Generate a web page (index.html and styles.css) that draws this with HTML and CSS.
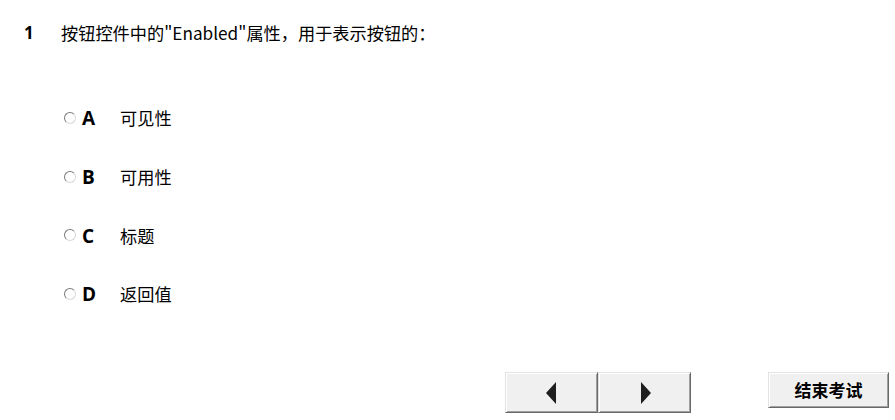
FILE: index.html
```html
<!DOCTYPE html>
<html lang="zh-CN">
<head>
<meta charset="utf-8">
<title>考试</title>
<link rel="stylesheet" href="styles.css">
</head>
<body>
<div class="page">
  <div class="question">
    <span class="qnum">1</span>
    <span class="qtext">按钮控件中的"Enabled"属性，用于表示按钮的：</span>
  </div>
  <ul class="options">
    <li class="option"><span class="radio"></span><span class="letter">A</span><span class="otext">可见性</span></li>
    <li class="option"><span class="radio"></span><span class="letter">B</span><span class="otext">可用性</span></li>
    <li class="option"><span class="radio"></span><span class="letter">C</span><span class="otext">标题</span></li>
    <li class="option"><span class="radio"></span><span class="letter">D</span><span class="otext">返回值</span></li>
  </ul>
  <div class="footer">
    <div class="nav">
      <button class="btn navbtn" type="button" aria-label="上一题"><span class="tri tri-left"></span></button>
      <button class="btn navbtn" type="button" aria-label="下一题"><span class="tri tri-right"></span></button>
    </div>
    <button class="btn endbtn" type="button">结束考试</button>
  </div>
</div>
</body>
</html>
```

FILE: styles.css
```css
html, body {
  margin: 0;
  padding: 0;
  background: #ffffff;
}

.page {
  height: 420px;
  display: flex;
  flex-direction: column;
  font-family: "Noto Sans CJK SC", "Noto Sans", sans-serif;
  color: #000;
}

.question {
  display: flex;
  align-items: center;
  height: 24px;
  margin-top: 21px;
}

.qnum {
  width: 37px;
  padding-left: 24px;
  font-family: "Open Sans", "Noto Sans", sans-serif;
  font-weight: 700;
  font-size: 17px;
  line-height: 24px;
}

.qtext {
  font-size: 17.2px;
  line-height: 24px;
}

.options {
  list-style: none;
  margin: 44px 0 0 0;
  padding: 0 0 0 63px;
}

.option {
  display: flex;
  align-items: center;
  height: 58.7px;
}

.radio {
  box-sizing: border-box;
  width: 12px;
  height: 12px;
  margin-left: 1px;
  margin-top: -1px;
  border-radius: 50%;
  border: 1px solid;
  border-color: #7a7a7a #d8d8d8 #d8d8d8 #7a7a7a;
  background: #fff;
}

.letter {
  width: 38px;
  margin-left: 6px;
  font-family: "Open Sans", "Noto Sans", sans-serif;
  font-weight: 700;
  font-size: 19px;
  line-height: 24px;
}

.otext {
  font-size: 17.2px;
  line-height: 24px;
}

.footer {
  margin-top: auto;
  margin-bottom: 7px;
  display: flex;
  align-items: flex-start;
  padding-left: 505px;
}

.nav {
  display: flex;
}

.btn {
  box-sizing: border-box;
  margin: 0;
  padding: 0;
  background: #f0f0f0;
  border: 1px solid;
  border-color: #e3e3e3 #696969 #696969 #e3e3e3;
  box-shadow: inset 1px 1px 0 #ffffff, inset -1px -1px 0 #a0a0a0;
  font-family: "Noto Sans CJK SC", sans-serif;
  color: #000;
}

.navbtn {
  width: 93px;
  height: 41px;
  display: flex;
  align-items: center;
  justify-content: center;
}

.tri {
  display: block;
  width: 0;
  height: 0;
  border-top: 11px solid transparent;
  border-bottom: 11px solid transparent;
}

.tri-left {
  border-right: 10px solid #1e1e1e;
  margin-left: -2px;
}

.tri-right {
  border-left: 10px solid #1e1e1e;
  margin-left: 2px;
}

.endbtn {
  margin-left: 77px;
  width: 121px;
  height: 36px;
  font-size: 17px;
  font-weight: 700;
  line-height: 24px;
}
```
